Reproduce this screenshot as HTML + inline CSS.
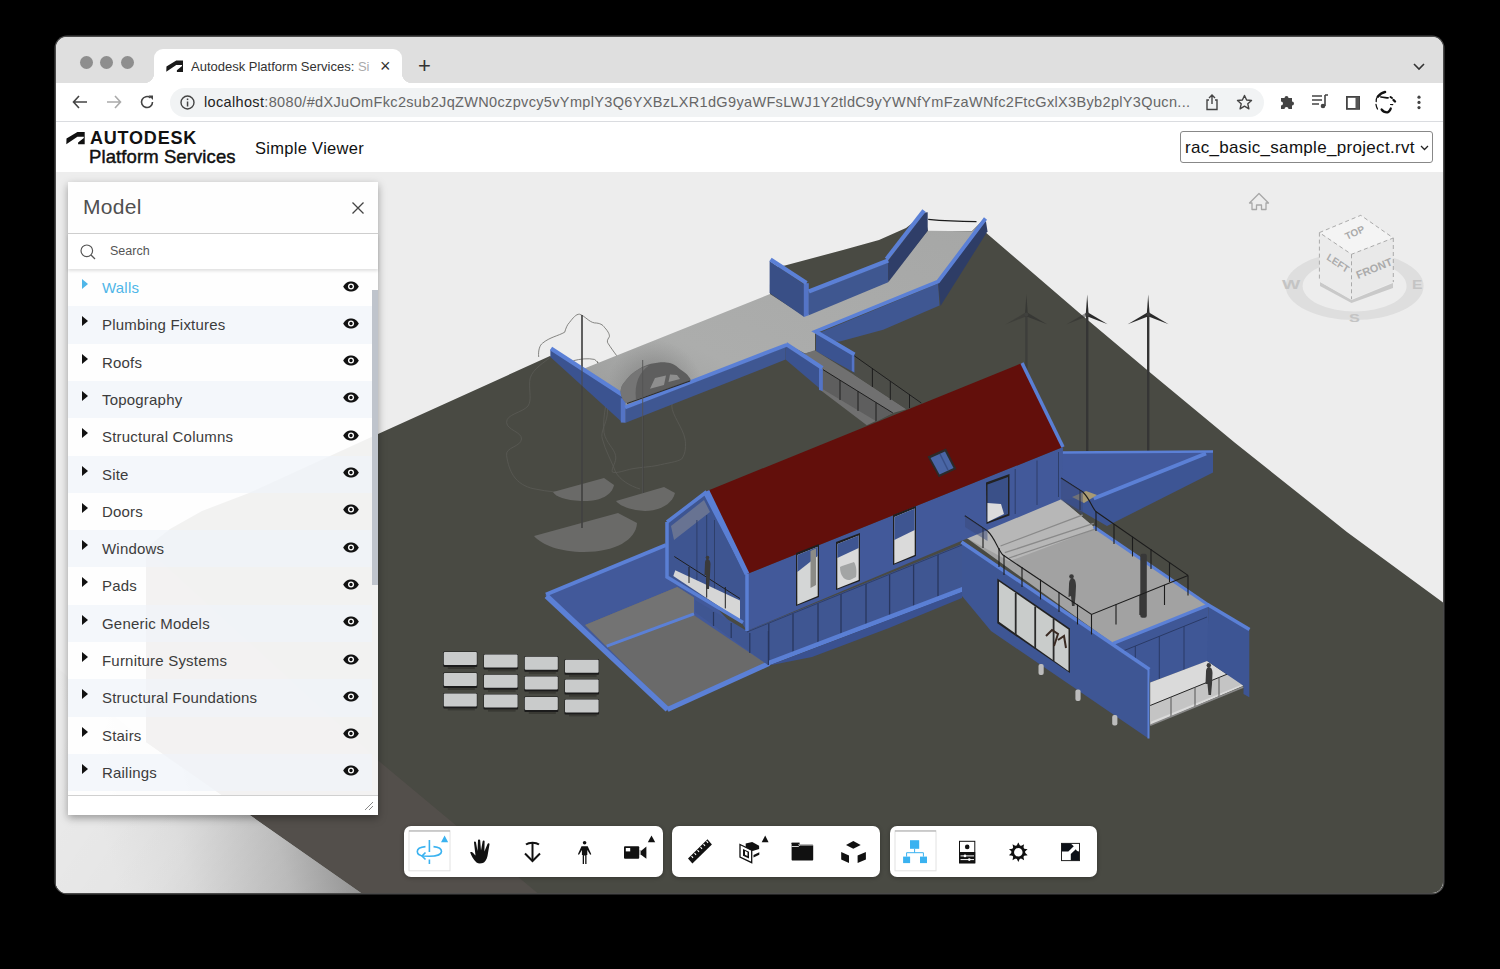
<!DOCTYPE html>
<html><head><meta charset="utf-8">
<style>
*{margin:0;padding:0;box-sizing:border-box}
html,body{width:1500px;height:969px;background:#000;overflow:hidden;font-family:"Liberation Sans",sans-serif}
.abs{position:absolute}
#win{position:absolute;left:56px;top:37px;width:1387px;height:856px;border-radius:11px;overflow:hidden;background:#fff;box-shadow:0 0 0 1.5px #4a4a4a}
#tabs{position:absolute;left:0;top:0;width:1388px;height:46px;background:#dfdfdf}
.dot{position:absolute;width:13px;height:13px;border-radius:50%;background:#8e8e8e;top:19px}
#tab{position:absolute;left:98px;top:12px;width:248px;height:34px;background:#fff;border-radius:9px 9px 0 0}
#tab:before,#tab:after{content:"";position:absolute;bottom:0;width:10px;height:10px}
#tab:before{left:-10px;background:radial-gradient(circle at 0 0,transparent 10px,#fff 10.5px)}
#tab:after{right:-10px;background:radial-gradient(circle at 100% 0,transparent 10px,#fff 10.5px)}
#toolbar{position:absolute;left:0;top:46px;width:1388px;height:39px;background:#fff;border-bottom:1px solid #dadce0}
#omni{position:absolute;left:114px;top:5px;width:1094px;height:29px;border-radius:15px;background:#f1f3f4}
#hdr{position:absolute;left:0;top:85px;width:1388px;height:50px;background:#fff}
#viewer{position:absolute;left:0;top:135px;width:1388px;height:722px;background:#ededed;overflow:hidden}
#scene{position:absolute;left:-56px;top:-172px}
#panel{position:absolute;left:12px;top:10px;width:310px;height:633px;background:rgba(255,255,255,0.93);box-shadow:0 3px 8px rgba(0,0,0,0.35);}
.row{position:absolute;left:0;width:304px;height:37.3px;font-size:15px;color:#3c3c3c;letter-spacing:0.2px}
.row.b{background:rgba(239,244,249,0.7)}
.row span{position:absolute;left:34px;top:10px}
.tri{position:absolute;left:14px;top:10px;width:0;height:0;border-left:6px solid #111;border-top:5px solid transparent;border-bottom:5px solid transparent}
.eye{position:absolute;left:274px;top:12px}
.tb{position:absolute;top:653.5px;height:51.5px;background:#fff;border-radius:7px;box-shadow:0 1px 4px rgba(0,0,0,0.3)}
.ic{position:absolute;top:0}
</style></head><body>
<div id="win">
  <div id="tabs">
    <div class="dot" style="left:24px"></div>
    <div class="dot" style="left:44px"></div>
    <div class="dot" style="left:65px"></div>
    <div id="tab">
      <svg class="abs" style="left:12px;top:11px" width="18" height="13" viewBox="0 0 20 13.5"><path d="M0.3,12.5 L0.5,6.8 L11.4,0 L18.9,0 L18.9,12.8 L12.1,12.8 L12.1,10.8 L17.8,6.2 L17.8,5 L11.4,5 Z" fill="#1a1a1a"/></svg>
      <div class="abs" style="left:37px;top:10px;font-size:13px;color:#333;white-space:nowrap;width:180px;overflow:hidden">Autodesk Platform Services: <span style="color:#aaa">Si</span></div>
      <div class="abs" style="left:226px;top:7px;font-size:18px;color:#333">&#215;</div>
    </div>
    <div class="abs" style="left:362px;top:19px;font-size:22px;color:#333;line-height:20px;font-weight:300">+</div>
    <svg class="abs" style="left:1357px;top:25.5px" width="12" height="8" viewBox="0 0 12 8"><path d="M1 1 L6 6 L11 1" stroke="#333" stroke-width="1.6" fill="none"/></svg>
  </div>
  <div id="toolbar">
    <svg class="abs" style="left:16px;top:11px" width="16" height="16" viewBox="0 0 16 16"><path d="M15 8 H2 M7 2 L1.5 8 L7 14" stroke="#444" stroke-width="1.6" fill="none"/></svg>
    <svg class="abs" style="left:50px;top:11px" width="16" height="16" viewBox="0 0 16 16"><path d="M1 8 H14 M9 2 L14.5 8 L9 14" stroke="#aaa" stroke-width="1.6" fill="none"/></svg>
    <svg class="abs" style="left:83px;top:11px" width="16" height="16" viewBox="0 0 16 16"><path d="M13.5 8 A5.5 5.5 0 1 1 11.5 3.8" stroke="#444" stroke-width="1.6" fill="none"/><path d="M9.5 1.5 L14 1.5 L14 6 Z" fill="#444"/></svg>
    <div id="omni">
      <svg class="abs" style="left:10px;top:7px" width="15" height="15" viewBox="0 0 15 15"><circle cx="7.5" cy="7.5" r="6.5" stroke="#444" stroke-width="1.4" fill="none"/><rect x="6.8" y="6.5" width="1.5" height="5" fill="#444"/><rect x="6.8" y="3.5" width="1.5" height="1.6" fill="#444"/></svg>
      <div class="abs" style="left:34px;top:6px;font-size:14.5px;color:#666;white-space:nowrap;letter-spacing:0.34px"><span style="color:#222">localhost</span>:8080/#dXJuOmFkc2sub2JqZWN0czpvcy5vYmplY3Q6YXBzLXR1dG9yaWFsLWJ1Y2tldC9yYWNfYmFzaWNfc2FtcGxlX3Byb2plY3Qucn...</div>
      <svg class="abs" style="left:1035px;top:6px" width="14" height="17" viewBox="0 0 14 17"><path d="M4 6 H2 V15.5 H12 V6 H10 M7 10 V1.5 M4 4 L7 1 L10 4" stroke="#444" stroke-width="1.4" fill="none"/></svg>
      <svg class="abs" style="left:1066px;top:6px" width="17" height="17" viewBox="0 0 17 17"><path d="M8.5 1.5 L10.6 6 L15.5 6.5 L11.8 9.8 L12.9 14.8 L8.5 12.2 L4.1 14.8 L5.2 9.8 L1.5 6.5 L6.4 6 Z" stroke="#444" stroke-width="1.4" fill="none" stroke-linejoin="round"/></svg>
    </div>
    <svg class="abs" style="left:1223px;top:10px" width="17" height="17" viewBox="0 0 17 17"><path d="M2 5 H5.5 A2 2 0 0 1 9.5 5 H13 V8.5 A2 2 0 0 1 13 12.5 V16 H9.5 A2 2 0 0 0 5.5 16 H2 V12.5 A2 2 0 0 0 2 8.5 Z" fill="#444"/></svg>
    <svg class="abs" style="left:1255px;top:10px" width="18" height="17" viewBox="0 0 18 17"><path d="M1 3 H11 M1 7 H11 M1 11 H8" stroke="#444" stroke-width="1.5"/><path d="M14 2 V13" stroke="#444" stroke-width="1.6"/><circle cx="12" cy="13" r="2.3" fill="#444"/><path d="M14 2 H17" stroke="#444" stroke-width="1.6"/></svg>
    <svg class="abs" style="left:1290px;top:12.5px" width="14" height="14" viewBox="0 0 14 14"><rect x="0.9" y="0.9" width="12.2" height="12" stroke="#444" stroke-width="1.8" fill="none"/><rect x="9.5" y="0.9" width="3.6" height="12" fill="#555"/></svg>
    <svg class="abs" style="left:1316px;top:6px" width="26" height="26" viewBox="0 0 26 26"><g stroke="#111" fill="none" stroke-linecap="round">
<path d="M6,7.5 C8,5 10.5,3.5 13,3" stroke-width="2.6"/>
<path d="M9,8 C11,8.5 14,8.5 16,8.8" stroke-width="1.8"/>
<path d="M18.5,8 L20,9" stroke-width="2"/>
<path d="M21.5,11 L23,12.5" stroke-width="2.4"/>
<path d="M5.5,7.5 C4.5,9 4,11 4.2,12.5 M4,15.5 C4.2,17 4.8,18.5 5.5,20" stroke-width="1.3"/>
<path d="M9.6,20.5 C11,22.5 13,23.5 15.5,23.3 C17,23 18,21.5 18.8,19.5" stroke-width="2.2"/>
<path d="M18.5,15.5 L20.8,15.6" stroke-width="1.1"/>
</g></svg>
    <svg class="abs" style="left:1360px;top:11px" width="6" height="17" viewBox="0 0 6 17"><circle cx="3" cy="3.2" r="1.6" fill="#444"/><circle cx="3" cy="8.4" r="1.6" fill="#444"/><circle cx="3" cy="13.6" r="1.6" fill="#444"/></svg>
  </div>
  <div id="hdr">
    <svg class="abs" style="left:10px;top:10px" width="20" height="13.5" viewBox="0 0 20 13.5"><path d="M0.3,12.3 L0.5,6.6 L11.4,0 L18.7,0 L18.7,12.3 L12.1,12.3 L12.1,10.4 L17.8,5.9 L17.8,4.8 L11.4,4.8 Z" fill="#111"/></svg>
    <div class="abs" style="left:34px;top:6px;font-size:18px;font-weight:bold;color:#111;letter-spacing:0.8px">AUTODESK</div>
    <div class="abs" style="left:33px;top:24px;font-size:18.5px;color:#111;letter-spacing:0.1px;-webkit-text-stroke:0.45px #111">Platform Services</div>
    <div class="abs" style="left:199px;top:17px;font-size:16.5px;color:#111;letter-spacing:0.3px">Simple Viewer</div>
    <div class="abs" style="left:1124px;top:8.5px;width:253px;height:32px;border:1px solid #888;border-radius:3px;background:#fff">
      <div class="abs" style="left:4px;top:6px;font-size:17px;color:#111;white-space:nowrap;letter-spacing:0.31px">rac_basic_sample_project.rvt</div>
      <svg class="abs" style="left:239px;top:13px" width="9" height="6" viewBox="0 0 9 6"><path d="M1 1 L4.5 4.5 L8 1" stroke="#222" stroke-width="1.3" fill="none"/></svg>
    </div>
  </div>
  <div id="viewer">
    <svg id="scene" width="1500" height="969" viewBox="0 0 1500 969">
      <defs>
  <linearGradient id="lg1" gradientUnits="userSpaceOnUse" x1="365" y1="893" x2="140" y2="960">
    <stop offset="0" stop-color="#a6a6a6"/><stop offset="0.3" stop-color="#cbcbcb"/><stop offset="0.7" stop-color="#e3e3e3"/><stop offset="1" stop-color="#ebebeb"/>
  </linearGradient>
  <linearGradient id="lg1b" gradientUnits="userSpaceOnUse" x1="360" y1="893" x2="80" y2="700">
    <stop offset="0" stop-color="#000" stop-opacity="0.12"/><stop offset="0.5" stop-color="#000" stop-opacity="0.03"/><stop offset="1" stop-color="#000" stop-opacity="0"/>
  </linearGradient>
  <clipPath id="slabclip"><polygon points="583,369 770,294 804,316 887,282 927.7,230.8 972,231.3 983,222 937,283 815,332 815,351 805,353.5 787,344 625,406"/></clipPath>
  <radialGradient id="carsh" gradientUnits="userSpaceOnUse" cx="655" cy="388" r="48"><stop offset="0" stop-color="#5a5a5a" stop-opacity="0.55"/><stop offset="0.6" stop-color="#6a6a6a" stop-opacity="0.25"/><stop offset="1" stop-color="#777" stop-opacity="0"/></radialGradient>
  <linearGradient id="slabg" x1="0" y1="1" x2="1" y2="0">
    <stop offset="0" stop-color="#9a9b9a"/><stop offset="0.3" stop-color="#acadac"/><stop offset="1" stop-color="#a6a7a6"/>
  </linearGradient>
</defs>
<rect x="0" y="0" width="1500" height="969" fill="#ededed"/>
<!-- bottom-left light region -->
<polygon points="0,620 146,742 470,969 0,969" fill="url(#lg1)"/>
<polygon points="0,620 146,742 470,969 0,969" fill="url(#lg1b)"/>
<!-- ground -->
<polygon points="146,548 170,529 202,511 249,493 378,434 550,356 583,372 770,297 770,268 785,265.5 843,250 879,240 906,228 924,214 928,231 972,231 985,218 985.7,232.5 1078.8,312.5 1149.5,372.1 1235.2,442.9 1346.9,531.9 1441,601 1500,646 1500,969 470,969 146,742" fill="#494a43"/>
<!-- brown band -->
<polygon points="146,548 146,742 470,969 629,969 452,822 380,762" fill="#534f4b"/>

<!-- tree outlines (faint) -->
<g stroke="#6a6a66" stroke-width="0.8" fill="none">
<path d="M538.7,357 C538,350 540,345 542.4,343.3 C550,337 558,336 564.7,332.2 C566,328 567,325 569.6,322.3 C573,318 576,314 579.5,314.2 C585,316 589,322 594.4,322.9 C600,323 603,325 604.3,327.2 C609,332 610,336 609.2,337.1 C607,340 607,342 608,343.3 C611,348 614,352 616.7,355.7 C620,360 622,362 624.1,364.4 C628,367 632,369 635.3,370.6"/>
<path d="M573.3,360.7 C580,359 588,358 594.4,359.4 C597,361 598,363 599.3,364.4"/>
<path stroke="#5a5b55" d="M549.5,358 C540,365 530,372 529.7,381.3 C529,392 532,400 528,406 C522,413 506,414 506.6,422.6 C507,430 522,432 521.5,439 C521,447 505,447 506.6,455.6 C508,465 510,470 513.2,475.4 C518,483 526,487 533,488.6 C548,492 565,493 581,493.6"/>
<path stroke="#5a5b55" d="M597.4,361.5 C603,375 609,400 607.3,414.3 C606,425 600,432 602.4,439 C605,450 612,462 615.6,472 C620,480 630,486 640,489"/>
<path stroke="#5a5b55" d="M615.6,359.8 C618,366 621,374 619,379.6 C616,388 607,396 605.7,406 C604,415 603,425 604,432.5 C606,443 614,448 615.6,455.6 C617,462 611,468 612.3,472 C616,474 626,470 632,468.8 C642,467 650,467 657,465.5 C667,463 677,462 681.7,459 C686,453 686,445 685,439 C683,428 672,415 671.8,406 C672,398 680,394 678.4,389.5 C676,382 670,376 665,373 C660,369 650,362 640,360"/>
</g>
<!-- shadow discs -->
<path d="M553,492 L604,478 L614,485 C612,496 598,502 581,501 C565,500 556,497 553,492 Z" fill="#6a6a68"/>
<path d="M616,501 L664,487 L675,493 C672,505 658,511 645,511 C630,510 620,506 616,501 Z" fill="#6a6a68"/>
<path d="M534,536 L618,513 L637,523 C636,540 615,552 584,552 C560,552 542,545 534,536 Z" fill="#6a6a68"/>
<line x1="582" y1="315" x2="582" y2="528" stroke="#333" stroke-width="1.3"/>
<line x1="643" y1="360" x2="643" y2="493" stroke="#3a3a3a" stroke-width="1"/>

<!-- PARKING -->
<polygon points="583,369 770,294 804,316 887,282 927.7,230.8 972,231.3 983,222 937,283 815,332 815,351 805,353.5 787,344 625,406" fill="url(#slabg)"/>
<path d="M928.2,219.4 C945,221 960,221.5 976.5,221.6" stroke="#1a1a1a" stroke-width="1.1" fill="none"/>
<circle cx="655" cy="388" r="48" fill="url(#carsh)" clip-path="url(#slabclip)"/>
<!-- back wall faces -->
<polygon points="769.6,261 804.2,284.5 804.2,317 769.6,293.1" fill="#394f86"/>
<polygon points="808.8,293.5 888.2,262.5 888.2,282.3 808.8,315.3" fill="#3f5790"/>
<polygon points="888.2,261 924.8,212.5 927.7,212.3 927.7,230.8 888.2,282.3" fill="#2f3e68"/>
<polygon points="803.8,283 808.8,283.3 808.8,315.3 803.8,317" fill="#5474c6"/>
<path d="M770.5,259.5 L806.5,283" stroke="#5b80d6" stroke-width="4.2"/>
<path d="M808.8,291.5 L888.2,260.5" stroke="#5b80d6" stroke-width="4.2"/>
<path d="M886.5,259 L924,210.5" stroke="#5b80d6" stroke-width="4.2"/>
<!-- right wall -->
<polygon points="816,332.4 855,355.2 855,373 816,351.2" fill="#3b5390"/>
<polygon points="819,333 938.2,283.5 939.5,305.6 883.2,329.8 838.9,341.8 830,340" fill="#3f5792"/>
<polygon points="938.2,283.5 985.9,221 987.5,231.3 940.5,306" fill="#2e3d66"/>
<polygon points="851.8,355 856,357.5 856,373 851.8,371" fill="#5474c6"/>
<polyline points="854.5,354.5 815.5,331.5 938.2,281.5 985.5,218.5" fill="none" stroke="#5b80d6" stroke-width="3.8"/>
<!-- walkway -->
<polygon points="804.9,353.4 814.8,350.3 854.4,375.1 906.4,409.2 892.8,412.9 866.8,425.3 821,390.6" fill="#707070"/>
<polygon points="854.4,356 921.3,403 906.4,409.2 854.4,375" fill="#4c4d48"/>
<polygon points="822.8,369.5 892.8,412.9 876.7,421.5 822.8,389.3" fill="#5e5e5e"/>
<g stroke="#1e1e1e" stroke-width="1" fill="none">
<path d="M822.8,369.5 L892.8,412.9 M854.4,355.9 L921.3,403 M840,380 L840,400 M858,391 L858,411 M876,402.5 L876,421 M872.4,368 L872.4,387 M890.3,381 L890.3,400 M909.5,394 L909.5,408"/>
</g>
<!-- left L wall -->
<polygon points="550.4,349.5 622.4,396.5 622.4,422.5 550.4,357" fill="#3b5390"/>
<polygon points="625.6,409 785.6,347 785.6,359.6 625.6,422.8" fill="#3f5792"/>
<polygon points="785.6,346 822.4,370 822.4,390.8 785.6,359.6" fill="#3b5390"/>
<polygon points="620.8,398 625.6,400 625.6,422.8 620.8,422.5" fill="#5474c6"/>
<polygon points="819,368 822.8,369 822.8,391 819,390" fill="#5474c6"/>
<path d="M551,348.5 L623.5,395.5" stroke="#5b80d6" stroke-width="4.2"/>
<path d="M625,407.5 L786.4,345" stroke="#5b80d6" stroke-width="4"/>
<path d="M786,344 L822.4,368" stroke="#5b80d6" stroke-width="4"/>
<!-- car -->
<path d="M626,403 C620,397 619,390 623,384 C628,377 633,372 639,369 C647,364 657,362 666,362.4 C673,363 677,366 680.4,369.6 C684,372 687,374 689,377 C691,379 691,381 690,381 Z" fill="#5e5e5e"/>
<path d="M626,403 C620,397 619,390 623,384 C628,377 633,372 639,369 C643,367 646,366 649,365.5 C640,372 634,382 636,400 Z" fill="#7a7a7a" opacity="0.8"/>
<path d="M650,388.8 L655,378 L666,375.5 L664,385 Z M668.5,382 L670,374.4 L677,375 L680,379 Z" fill="#8e8e8e"/>
<path d="M627,403.5 L690,381" stroke="#2e2e2e" stroke-width="1.3"/>
<line x1="582" y1="315" x2="582" y2="528" stroke="#4a4a4a" stroke-width="1"/>
<line x1="642.7" y1="360" x2="642.7" y2="493" stroke="#555" stroke-width="0.9"/>
<!-- turbines -->
<g opacity="0.55">
<rect x="1025.2" y="313" width="2.4" height="57" fill="#353535"/>
<path d="M1025.0,314 L1026.4,294.5 L1027.8000000000002,314 Z" fill="#2a2a2a"/>
<path d="M1027.2,312.5 L1046.9,324.2 L1026.7,316.5 Z" fill="#2a2a2a"/>
<path d="M1025.6000000000001,312.5 L1005.9000000000001,324.2 L1026.1000000000001,316.5 Z" fill="#2a2a2a" opacity="0.6"/>
<circle cx="1026.4" cy="314.5" r="1.9" fill="#3a3a3a"/>
</g>
<g opacity="1.0">
<rect x="1086.0" y="313" width="2.4" height="138" fill="#353535"/>
<path d="M1085.8,314 L1087.2,294.5 L1088.6000000000001,314 Z" fill="#2a2a2a"/>
<path d="M1088.0,312.5 L1107.7,324.2 L1087.5,316.5 Z" fill="#2a2a2a"/>
<path d="M1086.4,312.5 L1066.7,324.2 L1086.9,316.5 Z" fill="#2a2a2a" opacity="0.45"/>
<circle cx="1087.2" cy="314.5" r="1.9" fill="#3a3a3a"/>
</g>
<g opacity="1.0">
<rect x="1147.0" y="313" width="2.4" height="138" fill="#353535"/>
<path d="M1146.8,314 L1148.2,294.5 L1149.6000000000001,314 Z" fill="#2a2a2a"/>
<path d="M1149.0,312.5 L1168.7,324.2 L1148.5,316.5 Z" fill="#2a2a2a"/>
<path d="M1147.4,312.5 L1127.7,324.2 L1147.9,316.5 Z" fill="#2a2a2a" opacity="1.0"/>
<circle cx="1148.2" cy="314.5" r="1.9" fill="#3a3a3a"/>
</g>
<!-- solar panels -->
<rect x="443.3" y="651.5" width="34" height="15.5" rx="1" fill="#1c1c1c"/>
<rect x="443.8" y="652" width="33" height="13" rx="1" fill="#c9cbcb"/>
<rect x="447.8" y="667" width="27" height="2" fill="#2e2f2a" opacity="0.6"/>
<rect x="443.3" y="672.5" width="34" height="15.5" rx="1" fill="#1c1c1c"/>
<rect x="443.8" y="673" width="33" height="13" rx="1" fill="#c9cbcb"/>
<rect x="447.8" y="688" width="27" height="2" fill="#2e2f2a" opacity="0.6"/>
<rect x="443.3" y="692.9" width="34" height="15.5" rx="1" fill="#1c1c1c"/>
<rect x="443.8" y="693.4" width="33" height="13" rx="1" fill="#c9cbcb"/>
<rect x="447.8" y="708.4" width="27" height="2" fill="#2e2f2a" opacity="0.6"/>
<rect x="483.5" y="653.9" width="34.6" height="15.5" rx="1" fill="#1c1c1c"/>
<rect x="484" y="654.4" width="33.6" height="13" rx="1" fill="#c9cbcb"/>
<rect x="488" y="669.4" width="27.6" height="2" fill="#2e2f2a" opacity="0.6"/>
<rect x="483.5" y="674.3" width="34.6" height="15.5" rx="1" fill="#1c1c1c"/>
<rect x="484" y="674.8" width="33.6" height="13" rx="1" fill="#c9cbcb"/>
<rect x="488" y="689.8" width="27.6" height="2" fill="#2e2f2a" opacity="0.6"/>
<rect x="483.5" y="694.1" width="34.6" height="15.5" rx="1" fill="#1c1c1c"/>
<rect x="484" y="694.6" width="33.6" height="13" rx="1" fill="#c9cbcb"/>
<rect x="488" y="709.6" width="27.6" height="2" fill="#2e2f2a" opacity="0.6"/>
<rect x="524.3" y="656.3" width="34" height="15.5" rx="1" fill="#1c1c1c"/>
<rect x="524.8" y="656.8" width="33" height="13" rx="1" fill="#c9cbcb"/>
<rect x="528.8" y="671.8" width="27" height="2" fill="#2e2f2a" opacity="0.6"/>
<rect x="524.3" y="676.1" width="34" height="15.5" rx="1" fill="#1c1c1c"/>
<rect x="524.8" y="676.6" width="33" height="13" rx="1" fill="#c9cbcb"/>
<rect x="528.8" y="691.6" width="27" height="2" fill="#2e2f2a" opacity="0.6"/>
<rect x="524.3" y="696.5" width="34" height="15.5" rx="1" fill="#1c1c1c"/>
<rect x="524.8" y="697" width="33" height="13" rx="1" fill="#c9cbcb"/>
<rect x="528.8" y="712" width="27" height="2" fill="#2e2f2a" opacity="0.6"/>
<rect x="564.5" y="659.3" width="34.6" height="15.5" rx="1" fill="#1c1c1c"/>
<rect x="565" y="659.8" width="33.6" height="13" rx="1" fill="#c9cbcb"/>
<rect x="569" y="674.8" width="27.6" height="2" fill="#2e2f2a" opacity="0.6"/>
<rect x="564.5" y="679.1" width="34.6" height="15.5" rx="1" fill="#1c1c1c"/>
<rect x="565" y="679.6" width="33.6" height="13" rx="1" fill="#c9cbcb"/>
<rect x="569" y="694.6" width="27.6" height="2" fill="#2e2f2a" opacity="0.6"/>
<rect x="564.5" y="698.9" width="34.6" height="15.5" rx="1" fill="#1c1c1c"/>
<rect x="565" y="699.4" width="33.6" height="13" rx="1" fill="#c9cbcb"/>
<rect x="569" y="714.4" width="27.6" height="2" fill="#2e2f2a" opacity="0.6"/>

<!-- COURTYARD -->
<polygon points="545,595 665.5,545 700,590 769,664 667,711" fill="#42599a"/>
<polygon points="585.1,625.1 677.3,586.9 694,597.6 694,615.3 768.4,665.3 667.5,707.5 609.6,649.6" fill="#6a6a6a"/>
<polygon points="585.1,625.1 677.3,586.9 694,597.6 694,614.3 606.7,646.7" fill="#737373"/>
<path d="M546,594.5 L666,545" stroke="#5b80d6" stroke-width="4"/>
<path d="M546.5,596 L667.5,709.5" stroke="#5b80d6" stroke-width="5.5"/>
<path d="M667.5,709.5 L769,663.5" stroke="#5b80d6" stroke-width="5"/>
<path d="M606.7,646.2 L694,613.8" stroke="#5b80d6" stroke-width="3"/>

<!-- RIGHT WING -->
<!-- back triangular wall -->
<polygon points="1062,453 1213,452 1213,472.5 1107,526 1062,500" fill="#3d5594"/>
<polygon points="1062,453 1213,452 1204,454 1093.7,498.5 1062,500" fill="#42599c"/>
<path d="M1093.7,498.5 L1206,453.5" stroke="#5b80d6" stroke-width="4"/>
<path d="M1062,452.5 L1213,451.5" stroke="#5b80d6" stroke-width="2.5"/>
<polygon points="1072,497 1086,491 1097,495 1084,503" fill="#a89a74"/>
<!-- terrace floor -->
<polygon points="966,537.5 1059,497.4 1093.7,526.7 1208.5,605 1113,643.5" fill="#a2a2a2"/>
<polygon points="966,537.5 1059,497.4 1096,528.8 1009,561.3" fill="#b7b7b7"/>
<g stroke="#8a8a8a" stroke-width="1.3"><path d="M1000.5,546 L1082.8,514.8 M1004.8,552.7 L1093.7,523.4 M1009,558 L1095.8,528.8"/></g>
<path d="M1093.7,526.7 L1208.5,605" stroke="#5b80d6" stroke-width="3"/>
<!-- porch back wall -->
<polygon points="1113,643.5 1208.5,605 1208,661 1150.2,682.4 1148.5,671" fill="#3f5796"/>
<g stroke="#2a3a66" stroke-width="1"><path d="M1123,651 L1207,617 M1135.3,646 L1135.3,688 M1159.3,636 L1159.3,680 M1184,626 L1184,671"/></g>
<path d="M1113,643.5 L1208.5,605" stroke="#5b80d6" stroke-width="3.2"/>
<!-- porch floor -->
<polygon points="1150.2,682.4 1207.1,661 1243.5,685.7 1150.2,725.3" fill="#dadada"/>
<polygon points="1150.2,705.5 1243.5,667.5 1243.5,684 1150.2,722" fill="#c4c4c4"/>
<path d="M1150.2,705.5 L1243.5,667.5" stroke="#222" stroke-width="1"/>
<g stroke="#555" stroke-width="1"><path d="M1171,697 L1171,717 M1195,687 L1195,707 M1219,677 L1219,697 M1243.5,667.5 L1243.5,685"/></g>
<path d="M1150.2,725.3 L1243.5,687" stroke="#888" stroke-width="1.5"/>
<!-- right end wall -->
<polygon points="1208.5,605 1249.3,629.5 1249.3,697.2 1243.5,694 1243.5,685.7 1207.1,661" fill="#3d5594"/>
<path d="M1207.5,604.5 L1249.5,629.5" stroke="#5b80d6" stroke-width="3.5"/>
<!-- big front wall -->
<polygon points="962,543 1148.5,670.8 1148.5,738.5 991,631 962,596" fill="#3e5694"/>
<path d="M961.5,542 L1149.5,669.5" stroke="#5b80d6" stroke-width="3.5"/>
<path d="M1148.5,670 L1148.5,738.5" stroke="#5b80d6" stroke-width="2"/>
<!-- sliding windows -->
<polygon points="997.3,578.5 1070,628.5 1070,673 997.3,623.2" fill="#222"/>
<polygon points="999,581.5 1068.5,629.5 1068.5,671 999,621.8" fill="#c9cccb"/>
<g stroke="#2a2a2a" stroke-width="1.8"><line x1="1015.7" y1="593" x2="1015.7" y2="635"/><line x1="1035.2" y1="606.5" x2="1035.2" y2="648.5"/><line x1="1053.6" y1="619" x2="1053.6" y2="661"/></g>
<path d="M1046,636 L1052,630 L1058,634 L1054,646 M1058,640 L1064,636 L1066,648" stroke="#3a2a22" stroke-width="2" fill="none"/>
<!-- stilts -->
<g fill="#bcbcbc"><rect x="1038.5" y="664" width="5.2" height="11" rx="2"/><rect x="1075.4" y="689.5" width="5.2" height="11.5" rx="2"/><rect x="1112.2" y="715" width="5.2" height="10.5" rx="2"/></g>

<!-- HOUSE -->
<!-- lower floor -->
<polygon points="695,600 747,631 962,544 962,593 768,665 695,612" fill="#3f5692"/>
<!-- upper front wall -->
<polygon points="747,574 1063,447 1062,499 966,539 747,631" fill="#42599a"/>
<!-- gable -->
<polygon points="667,522 705,493 747,574 747,631 741,622 673,578 667,577" fill="#3e5591"/>
<polygon points="671,526 704,500 710,512 674,540" fill="#8a8d94" opacity="0.55"/>
<g stroke="#2e3f6a" stroke-width="1"><path d="M696.9,520 L696.9,590 M706.7,515 L706.7,595 M714.5,520 L714.5,600"/></g>
<polygon points="675.3,570.2 740,600.6 740,620.2 673.3,576" fill="#d6d6d6"/>
<g stroke="#1e1e1e" stroke-width="1" fill="none"><path d="M674.3,556.5 L740,598.6 M689,567 L689,583 M706.7,576 L706.7,597.6 M725.3,587 L725.3,608.4"/></g>
<path d="M667,522 L705,493 L747,574 L747,631" stroke="#5a7fd4" stroke-width="3.5" fill="none"/>
<path d="M667,522 L667,577 L743,622.5" stroke="#5a7fd4" stroke-width="3.5" fill="none"/>
<g stroke="#28375f" stroke-width="1.2"><path d="M713.5,612 L713.5,626 M731.2,623 L731.2,638 M749.8,633 L749.8,653 M768.4,631 L768.4,665"/></g>
<!-- roof -->
<polygon points="747,574 707,491 1022,363 1063,447" fill="#620f0b"/>
<path d="M747,574 L707,491" stroke="#5a7fd4" stroke-width="5"/>
<path d="M1022,363 L1063,447" stroke="#5a7fd4" stroke-width="3.5"/>
<polygon points="927.5,456.6 946,448.4 956.4,469 938.8,477.3" fill="#2b2b2b"/>
<polygon points="930.5,458 945,451.5 953.5,468 939.5,474.5" fill="#4a66a6"/>
<path d="M940,454 L948,470" stroke="#3a5088" stroke-width="1.5"/>
<!-- windows -->
<polygon points="796,553 819,544 819,597 796,606" fill="#1f1f1f"/>
<polygon points="797.3,555 817.7,546.8 817.7,596 797.3,604.5" fill="#d4d6d6"/>
<polygon points="797.3,555 817.7,546.8 817.7,556 797.3,572" fill="#3e5591"/>
<polygon points="810.5,551 816,548.5 816,585 810.5,588" fill="#8b8b86"/>
<polygon points="836,542 860,533 860,581 836,590" fill="#1f1f1f"/>
<polygon points="837.3,544 858.7,535.5 858.7,580 837.3,588.5" fill="#dadada"/>
<polygon points="837.3,544 858.7,535.5 858.7,548 837.3,558" fill="#3e5591"/>
<path d="M840,567 C840,575 844,581 850,580 L856,577 C857,570 856,565 854,562 L842,566 Z" fill="#a3a5a5"/>
<polygon points="893,515 916,506 916,556 893,565" fill="#1f1f1f"/>
<polygon points="894.3,517 914.7,508.5 914.7,555 894.3,563.5" fill="#dadada"/>
<polygon points="894.3,517 914.7,508.5 914.7,530 894.3,540" fill="#3e5591"/>
<polygon points="986,482.4 1009.5,474 1009.5,515.5 986.5,524" fill="#222"/>
<polygon points="987.5,484.5 1008,477 1008,514 987.5,522" fill="#3a5088"/>
<polygon points="987.5,503 1001,504 1004,514 987.5,522" fill="#dcdcdc"/>
<g stroke="#2e3f6a" stroke-width="1"><path d="M1015.2,469 L1015.2,514 M1037,460.5 L1037,505 M1058.5,452 L1058.5,497"/></g>
<!-- panel lines lower floor -->
<g stroke="#28375f" stroke-width="1.3"><line x1="768.8" y1="623.2" x2="768.8" y2="664.9"/><line x1="793" y1="613.4" x2="793" y2="655.1"/><line x1="818" y1="603.3" x2="818" y2="645.0"/><line x1="841" y1="594.0" x2="841" y2="635.8"/><line x1="866" y1="583.9" x2="866" y2="625.7"/><line x1="889.6" y1="574.4" x2="889.6" y2="616.2"/><line x1="913.6" y1="564.7" x2="913.6" y2="606.5"/><line x1="938" y1="554.8" x2="938" y2="596.7"/></g>
<path d="M747,632 L962,545" stroke="#2f3f6a" stroke-width="1"/>
<polygon points="769,660.5 962,587 962,592 769,665.5" fill="#5a7fd4"/>
<polygon points="769,665.5 812,657 889,628 962,598 962,592" fill="#3a5190"/>
<!-- people -->
<g fill="#3a3a3a">
<path d="M1069,585 C1069,580 1071,578 1072,578 C1074,578 1076,580 1076,586 L1075.5,596 L1074.5,606 L1072,606 L1071,596 L1068.5,597 Z"/><circle cx="1071.5" cy="576.5" r="2.3"/>
<path d="M1206,672 C1206,668 1208,667 1209,667 C1211,667 1212.5,669 1212.5,673 L1212,684 L1211,695 L1208.5,695 L1207.5,684 L1205.5,684 Z"/><circle cx="1208.8" cy="665.3" r="2.2"/>
<path d="M705,563 C705,560 706.5,559 707.5,559 C709,559 710.5,561 710.5,564 L710,575 L709,589 L706.5,589 L706,575 L704.5,575 Z"/><circle cx="707.5" cy="557.5" r="1.8"/>
</g>
<rect x="1140.3" y="553.8" width="6.5" height="64" rx="2" fill="#383838"/>
<!-- terrace railing -->
<g stroke="#1c1c1c" stroke-width="1.1" fill="none">
<path d="M964.8,515.8 L987.5,531 C995,538 997,548 1002.7,554.8 L1091.5,614.4 L1188,575.4"/>
<path d="M1061,478 L1082.8,492 C1090,499 1091,506 1095.8,511.5 L1188,575.4"/>
<path d="M983,528 L983,548 M999,548 L999,567 M1004,555 L1004,575 M1022,567 L1022,587 M1040.5,579.5 L1040.5,599.5 M1059,592 L1059,612 M1077.5,604.5 L1077.5,624.5 M1091.5,614.4 L1091.5,634.4 M1116,604.5 L1116,624.5 M1140,595 L1140,615 M1164.5,585 L1164.5,605 M1188,575.4 L1188,595.4"/>
<path d="M1080,490 L1080,510 M1096,511.5 L1096,531 M1114,524 L1114,544 M1132.5,536.5 L1132.5,556.5 M1151,549 L1151,569 M1169.5,562 L1169.5,582"/>
</g>
<polygon points="965,516 987.5,531 987.5,541 965,527" fill="#3a4a7a" opacity="0.5"/>
<polygon points="1061,478 1082.8,492 1082.8,515 1061,500" fill="#3a4a7a" opacity="0.5"/>
<!-- home icon -->
<path d="M1249.5,203 L1259,193.5 L1268.5,203 L1266,203 L1266,209.5 L1261.5,209.5 L1261.5,205 L1256.5,205 L1256.5,209.5 L1252,209.5 L1252,203 Z" fill="none" stroke="#a8a8a8" stroke-width="1.3" stroke-linejoin="round"/>
<!-- compass ring -->
<path d="M1285.6,286 A69,34 0 1 0 1423.6,286 A69,34 0 1 0 1285.6,286 Z M1302.6,286 A52,25.5 0 1 1 1406.6,286 A52,25.5 0 1 1 1302.6,286 Z" fill="#dedede" fill-rule="evenodd"/>
<g font-family="Liberation Sans" font-weight="bold" fill="#c4c4c4" font-size="12.5">
<text x="1282" y="289.5" transform="translate(1282,289.5) scale(1.55,1) translate(-1282,-289.5)">W</text><text x="1412" y="289.5" transform="translate(1412,289.5) scale(1.25,1) translate(-1412,-289.5)">E</text><text x="1349" y="322.5" transform="translate(1349,322.5) scale(1.3,0.9) translate(-1349,-322.5)">S</text>
</g>
<!-- cube -->
<polygon points="1320,282 1351.5,300 1393,283 1393,288 1351.5,303 1320,286" fill="#c9c9c9"/>
<polygon points="1360.8,215.3 1393.3,238 1351.5,254.3 1319.4,232.6" fill="#f4f4f4"/>
<polygon points="1319.4,232.6 1351.5,254.3 1351.5,299.2 1319.4,281.4" fill="#ebebeb"/>
<polygon points="1351.5,254.3 1393.3,238 1393.3,282.1 1351.5,299.2" fill="#e9e9e9"/>
<g stroke="#aaaaaa" stroke-width="1" stroke-dasharray="4,3" fill="none">
<path d="M1319.4,232.6 L1360.8,215.3 L1393.3,238 L1351.5,254.3 Z"/>
<path d="M1319.4,232.6 L1319.4,281.4 M1351.5,254.3 L1351.5,299.2 M1393.3,238 L1393.3,282.1"/>
</g>
<g font-family="Liberation Sans" fill="#ababab" font-size="10" font-weight="bold">
<text transform="translate(1347,240) rotate(-25)">TOP</text>
<text transform="translate(1326,259) rotate(30) skewY(5)" font-size="10">LEFT</text>
<text transform="translate(1358,279) rotate(-22)" font-size="11">FRONT</text>
</g>
</svg>
    <div id="panel">
<div class="abs" style="left:15px;top:13px;font-size:21px;color:#505050;letter-spacing:0.3px">Model</div>
<svg class="abs" style="left:284px;top:20px" width="12" height="12" viewBox="0 0 12 12"><path d="M0.5 0.5 L11.5 11.5 M11.5 0.5 L0.5 11.5" stroke="#444" stroke-width="1.3"/></svg>
<div class="abs" style="left:0;top:51px;width:310px;height:1px;background:#cfcfcf"></div>
<div class="abs" style="left:0;top:52px;width:310px;height:35px;background:#fff;box-shadow:0 2px 3px rgba(0,0,0,0.12)">
<svg class="abs" style="left:12px;top:10px" width="16" height="16" viewBox="0 0 16 16"><circle cx="6.8" cy="6.8" r="5.8" stroke="#555" stroke-width="1.2" fill="none"/><path d="M11 11 L15 15" stroke="#555" stroke-width="1.2"/></svg>
<div class="abs" style="left:42px;top:10px;font-size:12.5px;color:#555">Search</div></div>
<div class="abs" style="left:0;top:87px;width:310px;height:525px;overflow:hidden">
<div class="row" style="top:0.0px"><div class="tri" style="border-left-color:#4fb6e8"></div><span style="color:#4fb6e8">Walls</span><svg class="eye" style="top:11.5px" width="18" height="11" viewBox="0 0 18 12"><path d="M0.5 6 C3 1.5 6 0.5 9 0.5 C12 0.5 15 1.5 17.5 6 C15 10.5 12 11.5 9 11.5 C6 11.5 3 10.5 0.5 6 Z" fill="#111"/><circle cx="9" cy="6" r="3.3" fill="#fff"/><circle cx="9" cy="6" r="1.8" fill="#111"/></svg></div>
<div class="row b" style="top:37.3px"><div class="tri" style="border-left-color:#111"></div><span style="color:#3c3c3c">Plumbing Fixtures</span><svg class="eye" style="top:11.5px" width="18" height="11" viewBox="0 0 18 12"><path d="M0.5 6 C3 1.5 6 0.5 9 0.5 C12 0.5 15 1.5 17.5 6 C15 10.5 12 11.5 9 11.5 C6 11.5 3 10.5 0.5 6 Z" fill="#111"/><circle cx="9" cy="6" r="3.3" fill="#fff"/><circle cx="9" cy="6" r="1.8" fill="#111"/></svg></div>
<div class="row" style="top:74.6px"><div class="tri" style="border-left-color:#111"></div><span style="color:#3c3c3c">Roofs</span><svg class="eye" style="top:11.5px" width="18" height="11" viewBox="0 0 18 12"><path d="M0.5 6 C3 1.5 6 0.5 9 0.5 C12 0.5 15 1.5 17.5 6 C15 10.5 12 11.5 9 11.5 C6 11.5 3 10.5 0.5 6 Z" fill="#111"/><circle cx="9" cy="6" r="3.3" fill="#fff"/><circle cx="9" cy="6" r="1.8" fill="#111"/></svg></div>
<div class="row b" style="top:111.9px"><div class="tri" style="border-left-color:#111"></div><span style="color:#3c3c3c">Topography</span><svg class="eye" style="top:11.5px" width="18" height="11" viewBox="0 0 18 12"><path d="M0.5 6 C3 1.5 6 0.5 9 0.5 C12 0.5 15 1.5 17.5 6 C15 10.5 12 11.5 9 11.5 C6 11.5 3 10.5 0.5 6 Z" fill="#111"/><circle cx="9" cy="6" r="3.3" fill="#fff"/><circle cx="9" cy="6" r="1.8" fill="#111"/></svg></div>
<div class="row" style="top:149.2px"><div class="tri" style="border-left-color:#111"></div><span style="color:#3c3c3c">Structural Columns</span><svg class="eye" style="top:11.5px" width="18" height="11" viewBox="0 0 18 12"><path d="M0.5 6 C3 1.5 6 0.5 9 0.5 C12 0.5 15 1.5 17.5 6 C15 10.5 12 11.5 9 11.5 C6 11.5 3 10.5 0.5 6 Z" fill="#111"/><circle cx="9" cy="6" r="3.3" fill="#fff"/><circle cx="9" cy="6" r="1.8" fill="#111"/></svg></div>
<div class="row b" style="top:186.5px"><div class="tri" style="border-left-color:#111"></div><span style="color:#3c3c3c">Site</span><svg class="eye" style="top:11.5px" width="18" height="11" viewBox="0 0 18 12"><path d="M0.5 6 C3 1.5 6 0.5 9 0.5 C12 0.5 15 1.5 17.5 6 C15 10.5 12 11.5 9 11.5 C6 11.5 3 10.5 0.5 6 Z" fill="#111"/><circle cx="9" cy="6" r="3.3" fill="#fff"/><circle cx="9" cy="6" r="1.8" fill="#111"/></svg></div>
<div class="row" style="top:223.8px"><div class="tri" style="border-left-color:#111"></div><span style="color:#3c3c3c">Doors</span><svg class="eye" style="top:11.5px" width="18" height="11" viewBox="0 0 18 12"><path d="M0.5 6 C3 1.5 6 0.5 9 0.5 C12 0.5 15 1.5 17.5 6 C15 10.5 12 11.5 9 11.5 C6 11.5 3 10.5 0.5 6 Z" fill="#111"/><circle cx="9" cy="6" r="3.3" fill="#fff"/><circle cx="9" cy="6" r="1.8" fill="#111"/></svg></div>
<div class="row b" style="top:261.1px"><div class="tri" style="border-left-color:#111"></div><span style="color:#3c3c3c">Windows</span><svg class="eye" style="top:11.5px" width="18" height="11" viewBox="0 0 18 12"><path d="M0.5 6 C3 1.5 6 0.5 9 0.5 C12 0.5 15 1.5 17.5 6 C15 10.5 12 11.5 9 11.5 C6 11.5 3 10.5 0.5 6 Z" fill="#111"/><circle cx="9" cy="6" r="3.3" fill="#fff"/><circle cx="9" cy="6" r="1.8" fill="#111"/></svg></div>
<div class="row" style="top:298.4px"><div class="tri" style="border-left-color:#111"></div><span style="color:#3c3c3c">Pads</span><svg class="eye" style="top:11.5px" width="18" height="11" viewBox="0 0 18 12"><path d="M0.5 6 C3 1.5 6 0.5 9 0.5 C12 0.5 15 1.5 17.5 6 C15 10.5 12 11.5 9 11.5 C6 11.5 3 10.5 0.5 6 Z" fill="#111"/><circle cx="9" cy="6" r="3.3" fill="#fff"/><circle cx="9" cy="6" r="1.8" fill="#111"/></svg></div>
<div class="row b" style="top:335.7px"><div class="tri" style="border-left-color:#111"></div><span style="color:#3c3c3c">Generic Models</span><svg class="eye" style="top:11.5px" width="18" height="11" viewBox="0 0 18 12"><path d="M0.5 6 C3 1.5 6 0.5 9 0.5 C12 0.5 15 1.5 17.5 6 C15 10.5 12 11.5 9 11.5 C6 11.5 3 10.5 0.5 6 Z" fill="#111"/><circle cx="9" cy="6" r="3.3" fill="#fff"/><circle cx="9" cy="6" r="1.8" fill="#111"/></svg></div>
<div class="row" style="top:373.0px"><div class="tri" style="border-left-color:#111"></div><span style="color:#3c3c3c">Furniture Systems</span><svg class="eye" style="top:11.5px" width="18" height="11" viewBox="0 0 18 12"><path d="M0.5 6 C3 1.5 6 0.5 9 0.5 C12 0.5 15 1.5 17.5 6 C15 10.5 12 11.5 9 11.5 C6 11.5 3 10.5 0.5 6 Z" fill="#111"/><circle cx="9" cy="6" r="3.3" fill="#fff"/><circle cx="9" cy="6" r="1.8" fill="#111"/></svg></div>
<div class="row b" style="top:410.3px"><div class="tri" style="border-left-color:#111"></div><span style="color:#3c3c3c">Structural Foundations</span><svg class="eye" style="top:11.5px" width="18" height="11" viewBox="0 0 18 12"><path d="M0.5 6 C3 1.5 6 0.5 9 0.5 C12 0.5 15 1.5 17.5 6 C15 10.5 12 11.5 9 11.5 C6 11.5 3 10.5 0.5 6 Z" fill="#111"/><circle cx="9" cy="6" r="3.3" fill="#fff"/><circle cx="9" cy="6" r="1.8" fill="#111"/></svg></div>
<div class="row" style="top:447.6px"><div class="tri" style="border-left-color:#111"></div><span style="color:#3c3c3c">Stairs</span><svg class="eye" style="top:11.5px" width="18" height="11" viewBox="0 0 18 12"><path d="M0.5 6 C3 1.5 6 0.5 9 0.5 C12 0.5 15 1.5 17.5 6 C15 10.5 12 11.5 9 11.5 C6 11.5 3 10.5 0.5 6 Z" fill="#111"/><circle cx="9" cy="6" r="3.3" fill="#fff"/><circle cx="9" cy="6" r="1.8" fill="#111"/></svg></div>
<div class="row b" style="top:484.9px"><div class="tri" style="border-left-color:#111"></div><span style="color:#3c3c3c">Railings</span><svg class="eye" style="top:11.5px" width="18" height="11" viewBox="0 0 18 12"><path d="M0.5 6 C3 1.5 6 0.5 9 0.5 C12 0.5 15 1.5 17.5 6 C15 10.5 12 11.5 9 11.5 C6 11.5 3 10.5 0.5 6 Z" fill="#111"/><circle cx="9" cy="6" r="3.3" fill="#fff"/><circle cx="9" cy="6" r="1.8" fill="#111"/></svg></div>
</div>
<div class="abs" style="left:304px;top:108px;width:6px;height:295px;background:#bfc4cc"></div>
<div class="abs" style="left:0;top:613px;width:310px;height:1px;background:#d0d0d0"></div>
<div class="abs" style="left:0;top:614px;width:310px;height:19px;background:#fff"></div>
<svg class="abs" style="left:296px;top:619px" width="10" height="10" viewBox="0 0 10 10"><path d="M1 9 L9 1 M5 9 L9 5" stroke="#888" stroke-width="1"/></svg>
</div>
    <div class="tb" style="left:347.5px;width:259px"></div>
<div class="tb" style="left:616px;width:207.5px"></div>
<div class="tb" style="left:833.5px;width:207px"></div>
<svg class="abs" style="left:-56px;top:-172px;pointer-events:none" width="1500" height="969" viewBox="0 0 1500 969">
<!-- active boxes -->
<rect x="409" y="830.8" width="41" height="40" fill="#fff" stroke="#e2e2e2" stroke-width="1"/>
<line x1="409" y1="831" x2="450" y2="831" stroke="#a8a8a8" stroke-width="1.2"/>
<rect x="895" y="830.8" width="41" height="40" fill="#fff" stroke="#e2e2e2" stroke-width="1"/>
<line x1="895" y1="831" x2="936" y2="831" stroke="#a8a8a8" stroke-width="1.2"/>
<!-- orbit -->
<g stroke="#3ab2f0" stroke-width="1.6" fill="none">
<line x1="429.4" y1="840" x2="429.4" y2="852"/>
<line x1="429.4" y1="859.5" x2="429.4" y2="864"/>
<path d="M424,856 C418,855.5 417.3,853 417.3,851.4 C417.3,848.6 421,847 425.5,846.6 M433.5,846.6 C438,847 441.5,848.6 441.5,851.4 C441.5,854.5 436,856.2 429.4,856.2 L422.5,856"/>
<path d="M425.5,852.5 L422,856 L425.5,859.5"/>
</g>
<path d="M441,842.3 L444.6,835.4 L448.2,842.3 Z" fill="#3ab2f0"/>
<!-- hand -->
<path d="M476.5,862.5 C473,859 471.5,856 470.2,852.5 C471,851.5 472.5,852 474,854 L475.5,855.5 L474,842.5 C474,841.2 475.8,841.2 476,842.5 L477.5,851 L478,840.5 C478,839.2 480,839.2 480.2,840.5 L481,850.5 L482.6,841.5 C482.8,840.2 484.6,840.3 484.6,841.6 L484.4,851.5 L487.5,844 C487.9,842.8 489.6,843 489.5,844.3 L487.5,856 C486.5,860 485,862.5 482,863.3 C479.8,863.6 478,863.5 476.5,862.5 Z" fill="#111"/>
<!-- up-down arrow -->
<g stroke="#111" stroke-width="2" fill="none">
<path d="M532.5,843 L532.5,860"/>
<path d="M525,853.5 L532.5,861 L540,853.5"/>
<path d="M526,844.5 C529,842 536,842 539,844.5"/>
</g>
<!-- person -->
<g fill="#111">
<circle cx="584.6" cy="842.8" r="1.8"/>
<path d="M581.5,846.2 L587.7,846.2 L591.3,854.3 L590.2,854.8 L587.3,850 L587.3,855 L586.5,855 L586.5,864 L585.2,864 L585.2,855.5 L584,855.5 L584,864 L582.7,864 L582.7,855 L581.9,855 L581.9,850 L579,854.8 L577.9,854.3 Z"/>
</g>
<!-- camera -->
<rect x="624" y="846.2" width="15.2" height="12.6" rx="1" fill="#111"/>
<rect x="625.8" y="848" width="4.4" height="3.4" fill="#fff"/>
<path d="M640.3,851.5 L646.4,846.5 L646.4,858.8 L640.3,854.3 Z" fill="#111"/>
<rect x="639.2" y="850" width="1.6" height="5" fill="#aaa"/>
<path d="M647.8,842.3 L651.5,835.4 L655.2,842.3 Z" fill="#111"/>
<!-- ruler -->
<path d="M688,858.4 L692.4,863.6 L711.9,844.5 L707.5,839.3 Z" fill="#111"/>
<g stroke="#fff" stroke-width="1.1">
<line x1="691.5" y1="856" x2="693" y2="857.8"/><line x1="694.5" y1="853" x2="696" y2="854.8"/><line x1="697.5" y1="850" x2="699" y2="851.8"/><line x1="700.5" y1="847" x2="702" y2="848.8"/><line x1="703.5" y1="844" x2="705" y2="845.8"/><line x1="706.5" y1="841" x2="708" y2="842.8"/>
</g>
<!-- section box -->
<path d="M740,844.5 L751.7,850.1 L751.7,862.7 L740,857.1 Z" fill="none" stroke="#111" stroke-width="1.3"/>
<path d="M743,849 L749,851.8 L749,858.5 L743,855.7 Z" fill="#111"/>
<path d="M745,851 L747.5,852.2 L747.5,856 L745,854.8 Z" fill="#fff"/>
<path d="M745.7,843.6 L752.2,841.9 L759.1,845.8 L759.1,849 L752.6,851 L745.7,847 Z" fill="#111"/>
<path d="M753.5,855 L759.3,852.3 L759.3,854.8 L753.5,857.5 Z" fill="#111"/>
<path d="M761.7,842.3 L765.2,835.4 L768.6,842.3 Z" fill="#111"/>
<!-- folder -->
<path d="M791.6,843 L797,843 L798.5,844.5 L812.2,844.5 C812.8,844.5 813.2,845 813.2,845.6 L813.2,859.6 C813.2,860.2 812.8,860.6 812.2,860.6 L792.6,860.6 C792,860.6 791.6,860.2 791.6,859.6 Z" fill="#111"/>
<rect x="791.6" y="842.6" width="8" height="1.4" fill="#111"/>
<path d="M791.6,846.5 L798.5,846.5 L799.8,845 L813.2,845" stroke="#fff" stroke-width="0.8" fill="none"/>
<!-- cube -->
<path d="M846,845 L853.3,841 L860.7,845 L853.3,848.8 Z" fill="#111"/>
<path d="M841.2,851.9 L849,855.6 L849,863.1 L841.2,859.4 Z" fill="#111"/>
<path d="M857.6,855.6 L865.9,851.9 L865.9,859.4 L857.6,863.1 Z" fill="#111"/>
<!-- tree -->
<g fill="#3ab2f0">
<rect x="910" y="840.2" width="9.2" height="8.6"/>
<rect x="903.1" y="856.6" width="7" height="6.5"/>
<rect x="920" y="856.6" width="7" height="6.5"/>
</g>
<path d="M914.6,848.8 L914.6,852.7 M906.6,856.6 L906.6,852.7 L923.4,852.7 L923.4,856.6" stroke="#3ab2f0" stroke-width="1" fill="none"/>
<!-- properties -->
<rect x="959.5" y="841.3" width="15.3" height="21.6" fill="none" stroke="#111" stroke-width="1"/>
<circle cx="967.2" cy="846.9" r="2.3" fill="#111"/>
<rect x="959.2" y="852" width="16" height="11.2" fill="#111"/>
<g stroke="#fff" stroke-width="1"><line x1="960.5" y1="855.9" x2="974" y2="855.9"/><line x1="960.5" y1="859.6" x2="974" y2="859.6"/></g>
<circle cx="965" cy="855.9" r="1.3" fill="#fff"/><circle cx="969.3" cy="859.6" r="1.3" fill="#fff"/>
<!-- gear -->
<g transform="translate(1018.3,852.2)">
<circle r="5.6" fill="none" stroke="#111" stroke-width="2.7"/>
<path d="M-1.83,-5.92 L-0.60,-8.58 L0.00,-9.80 L0.60,-8.58 L1.83,-5.92 Z M2.00,-5.87 L4.56,-7.29 L5.76,-7.93 L5.53,-6.59 L4.96,-3.71 Z M5.07,-3.57 L7.97,-3.22 L9.32,-3.03 L8.34,-2.08 L6.20,-0.09 Z M6.20,0.09 L8.34,2.08 L9.32,3.03 L7.97,3.22 L5.07,3.57 Z M4.96,3.71 L5.53,6.59 L5.76,7.93 L4.56,7.29 L2.00,5.87 Z M1.83,5.92 L0.60,8.58 L0.00,9.80 L-0.60,8.58 L-1.83,5.92 Z M-2.00,5.87 L-4.56,7.29 L-5.76,7.93 L-5.53,6.59 L-4.96,3.71 Z M-5.07,3.57 L-7.97,3.22 L-9.32,3.03 L-8.34,2.08 L-6.20,0.09 Z M-6.20,-0.09 L-8.34,-2.08 L-9.32,-3.03 L-7.97,-3.22 L-5.07,-3.57 Z M-4.96,-3.71 L-5.53,-6.59 L-5.76,-7.93 L-4.56,-7.29 L-2.00,-5.87 Z" fill="#111"/>
</g>
<!-- fullscreen -->
<rect x="1061.5" y="843.4" width="18" height="17.2" fill="none" stroke="#222" stroke-width="1"/>
<path d="M1061.8,843.5 L1070.8,843.5 L1073.8,846.2 L1068.3,851.6 L1061.8,851.6 Z" fill="#0d1118"/>
<path d="M1070.8,853.9 L1075.8,849.3 L1077,851 L1079,851.6 L1079,860.5 L1070.8,860.5 Z" fill="#0d1118"/>
</svg>

  </div>
</div>
</body></html>
